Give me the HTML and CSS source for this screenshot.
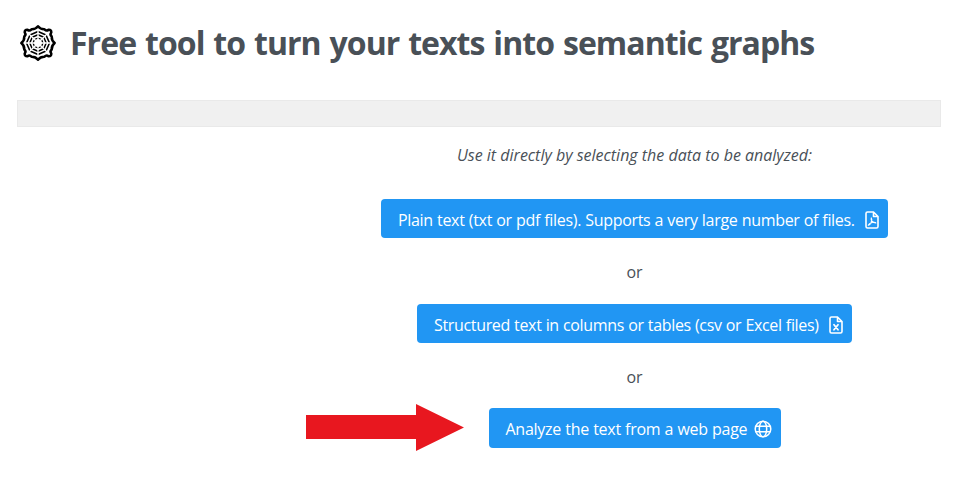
FILE: index.html
```html
<!DOCTYPE html>
<html lang="en">
<head>
    <meta charset="UTF-8">
    <meta name="viewport" content="width=device-width, initial-scale=1.0">
    <title>Free tool to turn your texts into semantic graphs</title>
    <link rel="stylesheet" href="styles.css">
</head>
<body>
    <header class="page-head">
        <svg class="logo" viewBox="0 0 38 38" fill="none" stroke="#000" stroke-linejoin="round" stroke-linecap="round">
            <path stroke-width="2.500" d="M19 2.300 Q21.500 5.500 25.500 5.300 Q27.500 7.500 29.500 5.700 Q32.500 5.500 32.300 8.500 Q30.500 10.500 32.700 12.500 Q32.500 16.500 35.700 19 Q32.500 21.500 32.700 25.500 Q30.500 27.500 32.300 29.500 Q32.500 32.500 29.500 32.300 Q27.500 30.500 25.500 32.700 Q21.500 32.500 19 35.700 Q16.500 32.500 12.500 32.700 Q10.500 30.500 8.500 32.300 Q5.500 32.500 5.700 29.500 Q7.500 27.500 5.300 25.500 Q5.500 21.500 2.300 19 Q5.500 16.500 5.300 12.500 Q7.500 10.500 5.700 8.500 Q5.500 5.500 8.500 5.700 Q10.500 7.500 12.500 5.300 Q16.500 5.500 19 2.300 Z"/>
            <path stroke-width="1.600" d="M19 7.500 L27 11 L30.500 19 L27 27 L19 30.500 L11 27 L7.500 19 L11 11 Z"/>
            <path stroke-width="1.500" d="M19 10.800 L24.800 13.200 L27.200 19 L24.800 24.800 L19 27.200 L13.200 24.800 L10.800 19 L13.200 13.200 Z"/>
            <path stroke-width="1.300" d="M19 14 L22.500 15.500 L24 19 L22.500 22.500 L19 24 L15.500 22.500 L14 19 L15.500 15.500 Z"/>
            <path stroke="#fff" stroke-width="1.400" d="M19 5.500 V32.500 M5.500 19 H32.500 M9 9 L29 29 M29 9 L9 29"/>
        </svg>
        <h1>Free tool to turn your texts into semantic graphs</h1>
    </header>

    <div class="bar"></div>

    <main class="options">
        <p class="intro">Use it directly by selecting the data to be analyzed:</p>

        <button class="btn btn-text">
            <span>Plain text (txt or pdf files). Supports a very large number of files.</span>
            <svg class="icon icon-file" viewBox="0 0 14 18" fill="none" stroke="currentColor" stroke-width="1.6" stroke-linejoin="round" stroke-linecap="round">
                <path d="M2.500 1 H8.500 L13 5.500 V15.500 Q13 17 11.500 17 H2.500 Q1 17 1 15.500 V2.500 Q1 1 2.500 1 Z M8.500 1 V5.500 H13"/>
                <path stroke-width="1.2" d="M6.300 7 Q5.800 8.800 7.200 10.400 Q8.500 12 10.800 12 Q10.500 10.800 7.300 11.500 Q4 12.300 3.300 14.200 Q4.800 14.400 6.200 11.300 Q7.300 8.500 6.300 7 Z"/>
            </svg>
        </button>

        <p class="or">or</p>

        <button class="btn btn-table">
            <span>Structured text in columns or tables (csv or Excel files)</span>
            <svg class="icon icon-file" viewBox="0 0 14 18" fill="none" stroke="currentColor" stroke-width="1.6" stroke-linejoin="round" stroke-linecap="round">
                <path d="M2.500 1 H8.500 L13 5.500 V15.500 Q13 17 11.500 17 H2.500 Q1 17 1 15.500 V2.500 Q1 1 2.500 1 Z M8.500 1 V5.500 H13"/>
                <path stroke-width="1.800" d="M5 8.800 L9 13.800 M9 8.800 L5 13.800"/>
            </svg>
        </button>

        <p class="or">or</p>

        <div class="web-row">
            <svg class="arrow" viewBox="0 0 158 47">
                <path fill="#e8171f" d="M0 11 H110 V0 L158 23.500 L110 47 V35 H0 Z"/>
            </svg>
            <button class="btn btn-web">
                <span>Analyze the text from a web page</span>
                <svg class="icon icon-globe" viewBox="0 0 18 18" fill="none" stroke="currentColor" stroke-width="1.5">
                    <circle cx="9" cy="9" r="7.800"/>
                    <ellipse cx="9" cy="9" rx="3.700" ry="7.800"/>
                    <path d="M1.800 6.300 H16.200 M1.800 11.700 H16.200"/>
                </svg>
            </button>
        </div>
    </main>
</body>
</html>
```

FILE: styles.css
```css
body {
    background-color: #fff;
    color: #495057;
    font-family: "Open Sans", "Noto Sans", sans-serif;
    box-sizing: border-box;
    min-height: 100vh;
    margin: 0;
    padding: 24px 14px 24px 17px;
}
.page-head {
    display: flex;
    align-items: center;
    height: 38px;
    padding-left: 2px;
}
.logo {
    width: 38px;
    height: 38px;
    flex: none;
}
h1 {
    font-size: 32px;
    font-weight: bold;
    line-height: 38px;
    letter-spacing: -0.95px;
    word-spacing: 1.5px;
    margin: 0 0 0 13px;
    white-space: nowrap;
}
.bar {
    height: 25px;
    margin-top: 38px;
    background-color: #f0f0f0;
    border: 1px solid #e9e9e9;
}
.options {
    display: flex;
    flex-direction: column;
    align-items: center;
    margin-left: 311px;
}
p {
    font-size: 16px;
    line-height: 24px;
    margin: 0;
    white-space: nowrap;
}
.intro {
    font-style: italic;
    margin: 16px 0 32px;
}
.or {
    margin: 22px 0 19px;
}
.btn {
    display: flex;
    align-items: center;
    justify-content: space-between;
    box-sizing: border-box;
    height: 39px;
    padding: 2px 9px 0 17px;
    border: none;
    border-radius: 4px;
    background-color: #2196f3;
    color: #fff;
    font-family: inherit;
    font-size: 16px;
    white-space: nowrap;
    cursor: pointer;
}
.btn-text {
    width: 507px;
    letter-spacing: -0.31px;
    word-spacing: 0.35px;
}
.btn-table {
    width: 435px;
    margin-top: 1px;
    letter-spacing: -0.34px;
    word-spacing: 0.35px;
}
.btn-web {
    width: 292px;
    height: 40px;
    padding-right: 9px;
    letter-spacing: -0.26px;
    word-spacing: 0.3px;
}
.icon {
    flex: none;
}
.icon-file {
    width: 14px;
    height: 18px;
}
.icon-globe {
    width: 18px;
    height: 18px;
}
.web-row {
    position: relative;
}
/* points at the web page option */
.arrow {
    position: absolute;
    top: -4px;
    right: 317px;
    width: 158px;
    height: 47px;
}
```
